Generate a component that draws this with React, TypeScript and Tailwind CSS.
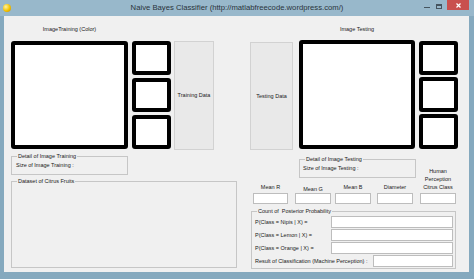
import React from "react"

const font = { fontFamily: '"Liberation Sans", Arial, sans-serif' }

function Axes({ className }: { className: string }) {
  return <div className={"rounded-[3px] border-[4px] border-black bg-white " + className} />
}

function Group({
  title,
  className,
  children,
}: {
  title: string
  className: string
  children?: React.ReactNode
}) {
  return (
    <div className={"relative border border-[#c6c6c6] " + className}>
      <span className="absolute left-[5px] top-[-4px] whitespace-pre bg-[#f0f0f0] px-[1px] leading-[7px]">
        {title}
      </span>
      {children}
    </div>
  )
}

function Edit({ className }: { className: string }) {
  return <div className={"border border-[#bdbdbd] bg-white " + className} />
}

function PushButton({ label, className }: { label: string; className: string }) {
  return (
    <div
      className={
        "flex items-center justify-center border border-[#d2d2d2] bg-[#e9e9e9] " + className
      }
    >
      {label}
    </div>
  )
}

const probRows = [
  "P(Class = Nipis | X) =",
  "P(Class = Lemon | X) =",
  "P(Class = Orange | X) =",
]

export default function App() {
  return (
    <div className="h-[279px] w-[474px] overflow-hidden bg-[#85a9be]" style={font}>
      {/* title bar */}
      <div className="grid h-[16px] grid-cols-[60px_1fr_60px] items-center bg-[#98b8cb]">
        <div className="flex items-center pl-[3px]">
          <div className="h-[8px] w-[8px] rounded-full bg-[radial-gradient(circle_at_35%_35%,#fff3a0,#f2c200_55%,#c98a00)]" />
        </div>
        <div className="text-center text-[7.7px] text-[#2a343b]">
          Naive Bayes Classifier (http://matlabfreecode.wordpress.com/)
        </div>
        <div className="flex h-full items-start justify-end">
          <div className="mr-[6px] mt-[7px] h-[1px] w-[6px] bg-[#45545f]" />
          <div className="mr-[5px] mt-[4px] h-[5px] w-[6px] border border-[#45545f] border-t-2" />
          <div className="mr-[5px] flex h-[10px] w-[22px] items-center justify-center bg-[#c9504e]">
            <svg width="5" height="5" viewBox="0 0 5 5">
              <path d="M0.5 0.5 L4.5 4.5 M4.5 0.5 L0.5 4.5" stroke="#fff" strokeWidth="1.2" />
            </svg>
          </div>
        </div>
      </div>

      {/* figure area */}
      <div className="ml-[4px] flex h-[256px] w-[465px] bg-[#f0f0f0] pl-[7px] pt-[8px] text-[5.5px] text-[#1a1a1a]">
        {/* training side */}
        <div className="flex w-[226px] flex-col">
          <div className="flex h-[10px] w-[117px] items-center justify-center">ImageTraining (Color)</div>
          <div className="mt-[7px] flex items-start">
            <Axes className="h-[108px] w-[117px]" />
            <div className="ml-[4px] flex w-[39px] flex-col gap-[3px]">
              <Axes className="h-[34px]" />
              <Axes className="h-[34px]" />
              <Axes className="h-[34px]" />
            </div>
            <PushButton label="Training Data" className="ml-[3px] h-[109px] w-[40px]" />
          </div>
          <Group title="Detail of Image Training" className="mt-[6px] h-[19px] w-[117px]">
            <div className="pl-[4px] pt-[5px] leading-[7px]">Size of Image Training :</div>
          </Group>
          <Group title="Dataset of Citrus Fruits" className="mt-[6px] h-[87px] w-[226px]" />
        </div>

        {/* testing side */}
        <div className="ml-[13px] flex w-[208px] flex-col">
          <div className="ml-[49px] flex h-[10px] w-[116px] items-center justify-center">Image Testing</div>
          <div className="mt-[6px] flex items-start">
            <PushButton label="Testing Data" className="mt-[2px] h-[108px] w-[43px]" />
            <Axes className="ml-[6px] h-[109px] w-[116px]" />
            <div className="ml-[4px] mt-[1px] flex w-[39px] flex-col gap-[2px]">
              <Axes className="h-[34px]" />
              <Axes className="h-[35px]" />
              <Axes className="h-[35px]" />
            </div>
          </div>

          <div className="ml-[3px] mt-[9px] grid grid-cols-[42px_40px_42px_43px_36px] grid-rows-[24px_10px_11px]">
            <div className="col-span-3 col-start-2 row-start-1 self-start">
              <Group title="Detail of Image Testing" className="ml-[4px] h-[19px] w-[117px]">
                <div className="pl-[3px] pt-[5px] leading-[7px]">Size of Image Testing :</div>
              </Group>
            </div>
            <div className="col-start-5 row-span-2 row-start-1 mb-[2px] self-end text-center leading-[8px]">
              Human
              <br />
              Perception
              <br />
              Citrus Class
            </div>
            <div className="col-start-1 row-start-2 w-[35px] text-center leading-[8px]">Mean R</div>
            <div className="col-start-2 row-start-2 w-[36px] translate-y-[2px] text-center leading-[8px]">Mean G</div>
            <div className="col-start-3 row-start-2 w-[36px] text-center leading-[8px]">Mean B</div>
            <div className="col-start-4 row-start-2 w-[36px] text-center leading-[8px]">Diameter</div>
            <Edit className="col-start-1 row-start-3 h-[11px] w-[35px]" />
            <Edit className="col-start-2 row-start-3 h-[11px] w-[36px]" />
            <Edit className="col-start-3 row-start-3 h-[11px] w-[36px]" />
            <Edit className="col-start-4 row-start-3 h-[11px] w-[36px]" />
            <Edit className="col-start-5 row-start-3 h-[11px] w-[36px]" />
          </div>

          <Group title="Count of  Posterior Probability" className="ml-[1px] mt-[7px] h-[58px] w-[205px]">
            <div className="flex flex-col gap-[1px] pl-[3px] pr-[2px] pt-[4px]">
              {probRows.map((r) => (
                <div key={r} className="flex h-[12px] items-center">
                  <span className="flex-1">{r}</span>
                  <Edit className="h-[12px] w-[122px]" />
                </div>
              ))}
              <div className="flex h-[12px] items-center">
                <span className="flex-1">Result of Classification (Machine Perception) :</span>
                <Edit className="h-[12px] w-[80px]" />
              </div>
            </div>
          </Group>
        </div>
      </div>
    </div>
  )
}
